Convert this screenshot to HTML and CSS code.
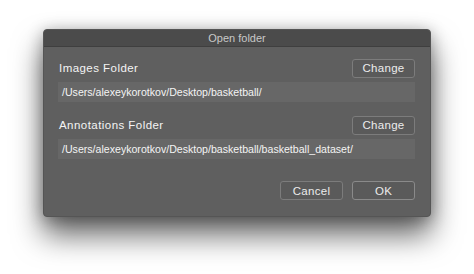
FILE: index.html
```html
<!DOCTYPE html>
<html lang='en-us'>
    <head>
        <meta charset='UTF-8'>
        <title>Open folder</title>
        <link rel="stylesheet" href="styles.css">
    </head>
    <body>
        <div class='dialog'>
            <div class='titlebar'>Open folder</div>
            <div class='content'>
                <div class='row'>
                    <label>Images Folder</label>
                    <button class='btn'>Change</button>
                </div>
                <div class='path'>/Users/alexeykorotkov/Desktop/basketball/</div>

                <div class='row second'>
                    <label>Annotations Folder</label>
                    <button class='btn'>Change</button>
                </div>
                <div class='path'>/Users/alexeykorotkov/Desktop/basketball/basketball_dataset/</div>

                <div class='actions'>
                    <button class='btn'>Cancel</button>
                    <button class='btn ok'>OK</button>
                </div>
            </div>
        </div>
    </body>
</html>
```

FILE: styles.css
```css
html, body {
    height: 100%;
}
body {
    margin: 0;
    padding: 29px 0 0 43px;
    box-sizing: border-box;
    background-color: #ffffff;
    font-family: "Liberation Sans", Arial, sans-serif;
}
.dialog {
    width: 388px;
    height: 188px;
    box-sizing: border-box;
    background-color: #5f5f5f;
    border-radius: 4px;
    border: 1px solid #555555;
    box-shadow: 0 18px 30px rgba(0, 0, 0, 0.6), 0 2px 16px rgba(0, 0, 0, 0.3);
    overflow: hidden;
}
.titlebar {
    height: 16px;
    line-height: 16px;
    background-color: #4b4b4b;
    border-bottom: 1px solid #3f3f3f;
    color: #c8c8c8;
    font-size: 11px;
    text-align: center;
}
.content {
    padding: 12px 15px 0 14px;
}
.row {
    display: flex;
    align-items: center;
    justify-content: space-between;
    height: 18px;
}
.row.second {
    margin-top: 14px;
}
label {
    color: #f4f4f4;
    font-size: 11.5px;
    letter-spacing: 0.45px;
    padding-left: 1px;
}
.btn {
    width: 63px;
    height: 19px;
    box-sizing: border-box;
    background-color: #5a5a5a;
    border: 1px solid #7c7c7c;
    border-radius: 3px;
    color: #ececec;
    font-family: "Liberation Sans", Arial, sans-serif;
    font-size: 11.5px;
    letter-spacing: 0.3px;
    padding: 0;
}
.path {
    margin-top: 5px;
    height: 20px;
    line-height: 20px;
    background-color: #676767;
    color: #f4f4f4;
    font-size: 10.6px;
    padding-left: 4px;
}
.actions {
    display: flex;
    justify-content: flex-end;
    gap: 9px;
    margin-top: 22px;
}
.ok {
    border-color: #8a8a8a;
}
```
